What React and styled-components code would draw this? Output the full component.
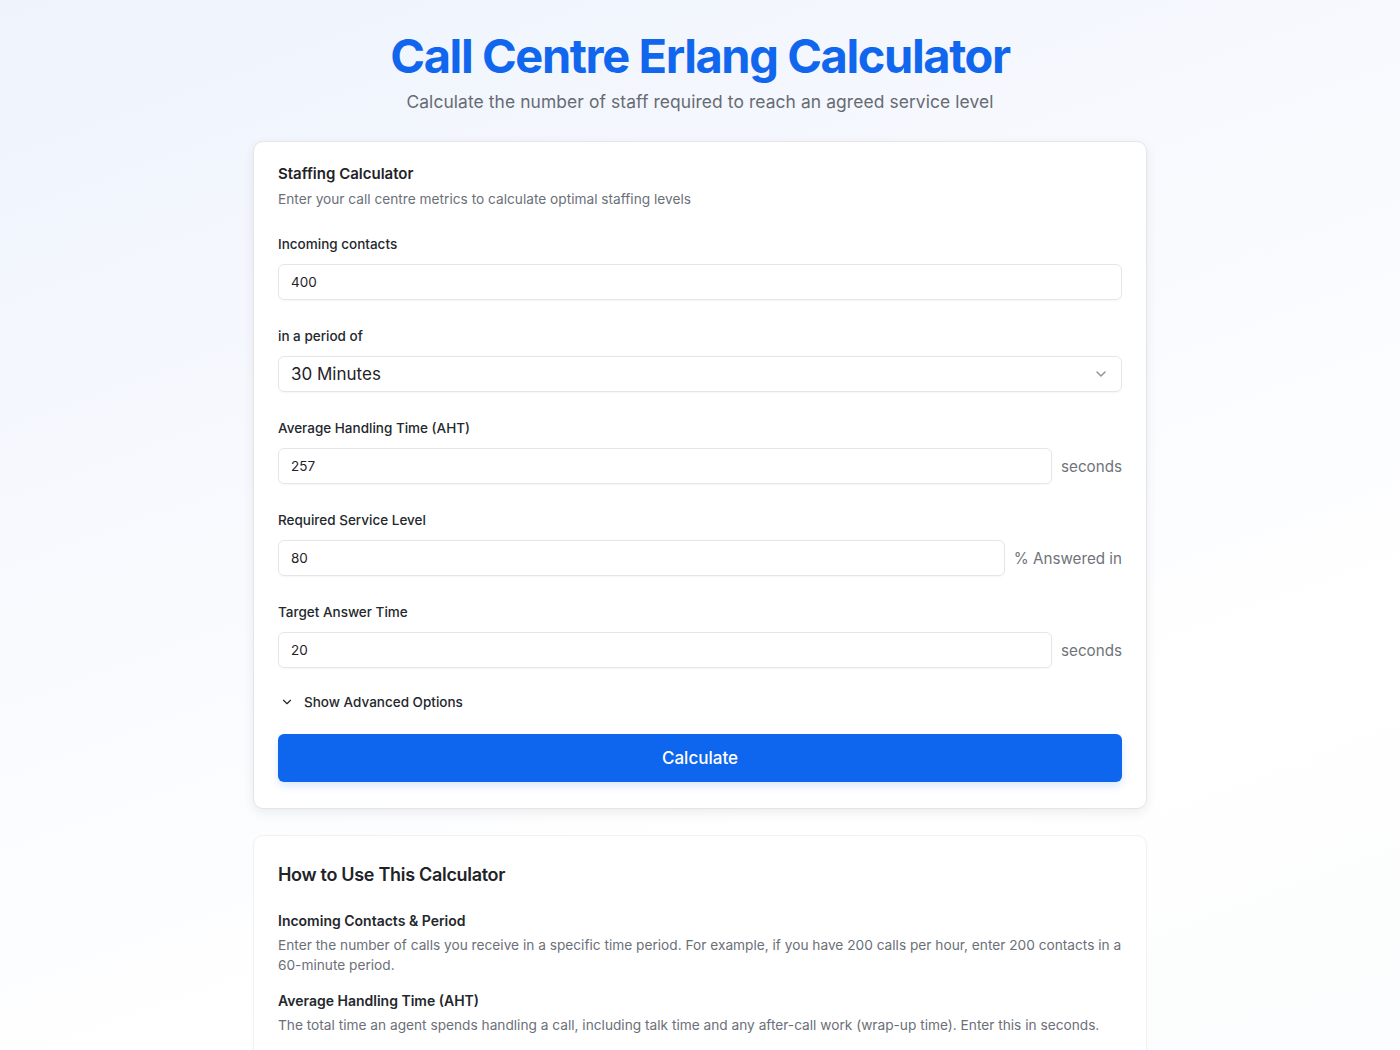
import React from 'react';
import styled, { createGlobalStyle } from 'styled-components';

const Global = createGlobalStyle`
  * { box-sizing: border-box; }
  body {
    margin: 0;
    font-family: Inter, "Noto Sans", sans-serif;
    color: #1f2328;
    background: linear-gradient(160deg, #eef3fc 0%, #f7f9fe 35%, #ffffff 70%, #fbfcfd 100%);
    min-height: 100vh;
  }
`;

const Page = styled.div`
  display: flex;
  flex-direction: column;
  align-items: center;
  padding: 28px 0 40px;
`;

const Title = styled.h1`
  margin: 0;
  font-size: 47px;
  font-weight: 700;
  letter-spacing: -1.4px;
  color: #1166ee;
  line-height: 56px;
`;

const Subtitle = styled.p`
  margin: 6px 0 0;
  font-size: 17.4px;
  letter-spacing: 0.1px;
  color: #666b73;
  line-height: 24px;
`;

const Card = styled.section`
  width: 894px;
  margin-top: ${p => p.$top || 0}px;
  background: #fff;
  border: 1px solid ${p => (p.$plain ? '#f1f2f4' : '#e3e5e8')};
  border-radius: 10px;
  box-shadow: ${p => (p.$plain ? '0 1px 3px rgba(0,0,0,0.03)' : '0 4px 12px rgba(0,0,0,0.07)')};
  padding: ${p => (p.$plain ? '24px' : '22px 24px 26px')};
`;

const CardTitle = styled.h2`
  margin: 0;
  font-size: 15px;
  font-weight: 600;
  line-height: 20px;
  color: #1f2328;
`;

const CardDesc = styled.p`
  margin: 5px 0 0;
  font-size: 13.7px;
  color: #6b7078;
  line-height: 20px;
`;

const Form = styled.div`
  display: flex;
  flex-direction: column;
  gap: 26px;
  margin-top: 25px;
`;

const Field = styled.div`
  display: flex;
  flex-direction: column;
  gap: 10px;
`;

const Label = styled.label`
  font-size: 13.5px;
  font-weight: 500;
  color: #24282d;
  line-height: 20px;
`;

const Row = styled.div`
  display: flex;
  align-items: center;
  gap: 9px;
`;

const Input = styled.div`
  flex-grow: 1;
  height: 36px;
  display: flex;
  align-items: center;
  justify-content: space-between;
  padding: 0 12px;
  border: 1px solid #e4e6e9;
  border-radius: 6px;
  box-shadow: 0 1px 2px rgba(0,0,0,0.04);
  font-size: ${p => (p.$big ? '17px' : '13.5px')};
  color: #1f2328;
`;

const Suffix = styled.span`
  font-size: 15.2px;
  color: #6f737a;
  white-space: nowrap;
`;

const Toggle = styled.div`
  display: flex;
  align-items: center;
  gap: 10px;
  margin-top: -2px;
  font-size: 13.5px;
  font-weight: 500;
  color: #24282d;
  line-height: 20px;
  padding-left: 2px;
`;

const Button = styled.button`
  height: 48px;
  width: 100%;
  margin-top: -4px;
  border: none;
  border-radius: 6px;
  background: #0f66ee;
  color: #fff;
  font-family: inherit;
  font-size: 17px;
  font-weight: 500;
  box-shadow: 0 4px 8px rgba(15,102,238,0.15);
`;

const HowTitle = styled.h2`
  margin: 2px 0 0;
  font-size: 18px;
  font-weight: 600;
  letter-spacing: -0.3px;
  color: #1f2328;
  line-height: 26px;
`;

const Section = styled.div`
  margin-top: ${p => p.$top}px;
`;

const SectionTitle = styled.h3`
  margin: 0;
  font-size: 14px;
  font-weight: 600;
  color: #24282d;
  line-height: 20px;
`;

const SectionText = styled.p`
  margin: 4px 0 0;
  font-size: 13.7px;
  color: #6b7078;
  line-height: 20px;
`;

const Chevron = ({ size = 14, color = '#6b7078' }) => (
  <svg width={size} height={size} viewBox="0 0 24 24" fill="none" stroke={color} strokeWidth="2" strokeLinecap="round" strokeLinejoin="round">
    <path d="m6 9 6 6 6-6" />
  </svg>
);

export default function App() {
  return (
    <Page>
      <Global />
      <Title>Call Centre Erlang Calculator</Title>
      <Subtitle>Calculate the number of staff required to reach an agreed service level</Subtitle>

      <Card $top={27}>
        <CardTitle>Staffing Calculator</CardTitle>
        <CardDesc>Enter your call centre metrics to calculate optimal staffing levels</CardDesc>
        <Form>
          <Field>
            <Label>Incoming contacts</Label>
            <Input>400</Input>
          </Field>
          <Field>
            <Label>in a period of</Label>
            <Input $big>
              30 Minutes
              <Chevron size={16} color="#8a8f96" />
            </Input>
          </Field>
          <Field>
            <Label>Average Handling Time (AHT)</Label>
            <Row>
              <Input>257</Input>
              <Suffix>seconds</Suffix>
            </Row>
          </Field>
          <Field>
            <Label>Required Service Level</Label>
            <Row>
              <Input>80</Input>
              <Suffix>% Answered in</Suffix>
            </Row>
          </Field>
          <Field>
            <Label>Target Answer Time</Label>
            <Row>
              <Input>20</Input>
              <Suffix>seconds</Suffix>
            </Row>
          </Field>
          <Toggle>
            <Chevron size={14} color="#24282d" />
            Show Advanced Options
          </Toggle>
          <Button>Calculate</Button>
        </Form>
      </Card>

      <Card $top={26} $plain>
        <HowTitle>How to Use This Calculator</HowTitle>
        <Section $top={23}>
          <SectionTitle>Incoming Contacts &amp; Period</SectionTitle>
          <SectionText>
            Enter the number of calls you receive in a specific time period. For example, if you have 200 calls per hour, enter 200 contacts in a 60-minute period.
          </SectionText>
        </Section>
        <Section $top={16}>
          <SectionTitle>Average Handling Time (AHT)</SectionTitle>
          <SectionText>
            The total time an agent spends handling a call, including talk time and any after-call work (wrap-up time). Enter this in seconds.
          </SectionText>
        </Section>
      </Card>
    </Page>
  );
}
